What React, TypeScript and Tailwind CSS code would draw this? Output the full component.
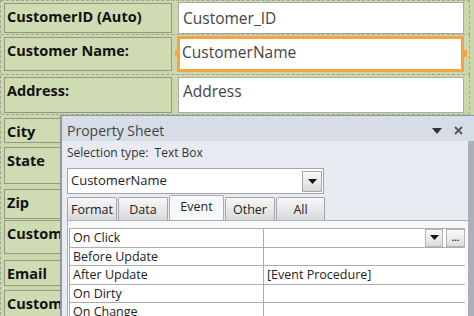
import React from "react";

const F = { fontFamily: '"Open Sans", "Noto Sans", sans-serif' };

function Label({ text, h, mt, clip }: { text: string; h: string; mt: string; clip?: boolean }) {
  return (
    <div className={`${mt} ${h} ml-[3px] w-[168px] shrink-0 border border-[#8f9a85] bg-[#cfdbb2] px-[2px] pt-[2px] text-[14.5px] font-bold leading-[22px] text-[#111]`}>
      {clip ? <span className="block w-[55px] overflow-hidden whitespace-nowrap">{text}</span> : text}
    </div>
  );
}

function TabBtn({ text, w, active }: { text: string; w: string; active?: boolean }) {
  if (active)
    return (
      <div className={`${w} -mb-px h-[26px] self-end rounded-t-[2px] border border-b-0 border-[#a9acb0] bg-[#f7f8fa] text-center text-[12.5px] leading-[22px] text-[#222]`}>
        {text}
      </div>
    );
  return (
    <div className={`${w} h-[23px] self-end rounded-t-[2px] border border-b-0 border-[#a3a6aa] bg-gradient-to-b from-[#f7f7f7] to-[#d9dadc] text-center text-[12.5px] leading-[24px] text-[#222]`}>
      {text}
    </div>
  );
}

function Row({ name, value, first }: { name: string; value?: string; first?: boolean }) {
  return (
    <div className="flex h-[18.5px] shrink-0 border-b border-[#adadad] bg-white text-[12.5px] leading-[17px] text-[#222]">
      <div className="w-[194px] border-r border-[#adadad] pl-[3px]">{name}</div>
      <div className="relative flex-1 pl-[3px]">
        {value}
        {first && (
          <div className="absolute right-0 top-0 flex h-full gap-[3px]">
            <div className="flex w-[18px] items-center justify-center border border-[#b5b5b5] bg-gradient-to-b from-[#fafafa] to-[#dcdcdc]">
              <svg width="9" height="5" viewBox="0 0 9 5"><path d="M0 0h9L4.5 5z" fill="#111" /></svg>
            </div>
            <div className="flex w-[19px] items-center justify-center border border-[#b5b5b5] bg-gradient-to-b from-[#fafafa] to-[#dcdcdc] text-[9px] font-bold leading-none text-[#222]">
              ...
            </div>
          </div>
        )}
      </div>
    </div>
  );
}

export default function App() {
  return (
    <div style={F} className="relative h-[316px] w-[474px] overflow-hidden bg-[#cbd8ac]">
      {/* form rows */}
      <div className="flex w-[470px] flex-col border-l border-dashed border-[#9ea796]">
        <div className="flex h-[35px] items-start border-b border-t border-r border-dashed border-[#9ea796]">
          <Label text="CustomerID (Auto)" h="h-[30px]" mt="mt-[2px]" />
          <div className="ml-[6px] mt-[1px] h-[32px] w-[286px] border border-[#a9aba6] bg-white pl-[4px] text-[15.5px] leading-[30px] text-[#444]">
            Customer_ID
          </div>
        </div>
        <div className="flex h-[40px] items-start border-b border-r border-dashed border-[#9ea796]">
          <Label text="Customer Name:" h="h-[34px]" mt="mt-[2px]" />
          <div className="relative ml-[5px] mt-[1px] h-[36px] w-[287px] border-[3px] border-[#f7a440] bg-white pl-[2px] text-[15.5px] leading-[26px] text-[#444]">
            CustomerName
            <div className="absolute -left-[5px] top-[11px] h-[7px] w-[3px] bg-[#f7a440]" />
            <div className="absolute -right-[6px] top-[11px] h-[7px] w-[3px] bg-[#f7a440]" />
          </div>
        </div>
        <div className="flex h-[40px] items-start border-b border-r border-dashed border-[#9ea796]">
          <Label text="Address:" h="h-[36px]" mt="mt-[2px]" />
          <div className="ml-[6px] mt-[2px] h-[36px] w-[286px] border border-[#a9aba6] bg-white pl-[4px] text-[15.5px] leading-[26px] text-[#444]">
            Address
          </div>
        </div>
        <Label text="City" h="h-[25px]" mt="mt-[3px]" />
        <Label text="State" h="h-[37px]" mt="mt-[4px]" />
        <Label text="Zip" h="h-[30px]" mt="mt-[5px]" />
        <Label text="Customer Phone" h="h-[34px]" mt="mt-[1px]" clip />
        <Label text="Email" h="h-[26px]" mt="mt-[6px]" />
        <Label text="Customer Fax" h="h-[30px]" mt="mt-[4px]" clip />
      </div>

      {/* Property Sheet floating pane */}
      <div className="absolute left-[60px] top-[115px] flex h-[201px] w-[414px] flex-col border-l-2 border-t border-[#8f98a4] bg-[#e8ecf2] text-[#333]">
        <div className="flex h-[25px] shrink-0 items-center justify-between bg-[#d6dde6] pl-[5px] pr-[11px] pt-[4px]">
          <span className="text-[14px] text-[#454545]">Property Sheet</span>
          <div className="flex items-center gap-[12px]">
            <svg width="10" height="6" viewBox="0 0 10 6"><path d="M0 0h10L5 6z" fill="#333" /></svg>
            <svg width="9" height="9" viewBox="0 0 9 9"><path d="M1 1l7 7M8 1L1 8" stroke="#555" strokeWidth="1.8" /></svg>
          </div>
        </div>
        <div className="flex min-h-0 flex-1">
          <div className="flex flex-1 flex-col pl-[5px]">
            <div className="mt-[4px] shrink-0 text-[12px] leading-[16px] text-[#333]">Selection type:&nbsp; Text Box</div>
            <div className="mt-[7px] flex h-[26px] w-[257px] shrink-0 items-center justify-between border border-[#a2a5a9] bg-white pl-[3px] pr-[1px] text-[13px] text-[#222]">
              <span>CustomerName</span>
              <div className="flex h-[21px] w-[20px] items-center justify-center border border-[#a7a9ac] bg-gradient-to-b from-[#fafafa] to-[#d8d9db]">
                <svg width="9" height="5" viewBox="0 0 9 5"><path d="M0 0h9L4.5 5z" fill="#111" /></svg>
              </div>
            </div>
            <div className="flex h-[26px] shrink-0 items-end gap-[1px]">
              <TabBtn text="Format" w="w-[50px]" />
              <TabBtn text="Data" w="w-[50px]" />
              <TabBtn text="Event" w="w-[55px]" active />
              <TabBtn text="Other" w="w-[50px]" />
              <TabBtn text="All" w="w-[49px]" />
            </div>
            <div className="flex-1 border-l border-t border-[#a9acb0] bg-[#f7f8fa] pl-[1px] pt-[7px]">
              <div className="w-[396px] border-l border-t border-[#adadad]">
                <Row name="On Click" first />
                <Row name="Before Update" />
                <Row name="After Update" value="[Event Procedure]" />
                <Row name="On Dirty" />
                <Row name="On Change" />
              </div>
            </div>
          </div>
          <div className="w-[6px] bg-[#aab0b8]" />
        </div>
      </div>
    </div>
  );
}
